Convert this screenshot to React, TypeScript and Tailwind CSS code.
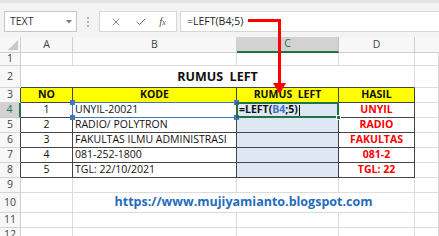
import { X, Check } from "lucide-react";

const rows = [
  { n: 4, no: "1", kode: "UNYIL-20021", hasil: "UNYIL" },
  { n: 5, no: "2", kode: "RADIO/ POLYTRON", hasil: "RADIO" },
  { n: 6, no: "3", kode: "FAKULTAS ILMU ADMINISTRASI", hasil: "FAKULTAS" },
  { n: 7, no: "4", kode: "081-252-1800", hasil: "081-2" },
  { n: 8, no: "5", kode: "TGL: 22/10/2021", hasil: "TGL: 22" },
];

const RowHead = ({ n, active = false, table = false }: { n: number; active?: boolean; table?: boolean }) => {
  if (active) {
    return (
      <div className="flex items-center justify-center bg-[#d2d2d2] text-[#217346] border-b border-b-[#c6c6c6] border-r-2 border-r-[#217346] text-[10.5px]">
        {n}
      </div>
    );
  }
  return (
    <div
      className={
        "flex items-center justify-center bg-[#f7f7f7] text-[#444] border-b border-b-[#d4d4d4] border-r text-[10.5px] " +
        (table ? "border-r-[#444]" : "border-r-[#cfcfcf]")
      }
    >
      {n}
    </div>
  );
};

const Blank = () => <div className="border-r border-b border-[#dcdcdc]" />;

export default function App() {
  return (
    <div className="relative w-[439px] h-[236px] overflow-hidden bg-white font-['Open_Sans',sans-serif]">
      {/* formula bar */}
      <div className="h-[37px] bg-[#f3f3f3] border-t-[3px] border-[#e2e2e2] flex items-start pt-[8px] pl-[4px]">
        <div className="w-[73px] h-[21px] bg-white border border-[#c6c6c6] flex items-center justify-between pl-[5px] pr-[4px] text-[10.5px] text-[#333]">
          <span>TEXT</span>
          <svg width="6" height="4" viewBox="0 0 6 4">
            <path d="M0 0 H6 L3 3.5 Z" fill="#777" />
          </svg>
        </div>
        <div className="w-[22px] h-[21px] flex flex-col items-center justify-center gap-[2px]">
          <span className="w-[2px] h-[2px] bg-[#b0b0b0]" />
          <span className="w-[2px] h-[2px] bg-[#b0b0b0]" />
          <span className="w-[2px] h-[2px] bg-[#b0b0b0]" />
        </div>
        <div className="w-[78px] h-[21px] bg-white border border-[#d6d6d6] flex items-center justify-around px-[4px] text-[#555]">
          <X size={12} strokeWidth={1.4} />
          <Check size={12} strokeWidth={1.8} />
          <span className="italic text-[11px] font-['Liberation_Serif',serif] leading-none">
            f<span className="text-[8px]">x</span>
          </span>
        </div>
        <div className="ml-[3px] flex-1 h-[21px] bg-white border border-r-0 border-[#d6d6d6] flex items-center pl-[6px] text-[10.5px] text-[#222]">
          =LEFT(B4;5)
        </div>
      </div>

      {/* sheet */}
      <div className="grid grid-cols-[21px_52px_164px_102px_76px_24px] grid-rows-[16px_13px_22px_15px_15px_15px_15px_15px_15px_15px_20px_15px_15px] text-[10.5px] text-[#111]">
        {/* column headers */}
        <div className="relative bg-[#f7f7f7] border-r border-b border-[#cfcfcf]">
          <svg className="absolute right-[2px] bottom-[2px]" width="10" height="10" viewBox="0 0 10 10">
            <path d="M10 0 V10 H0 Z" fill="#c8c8c8" />
          </svg>
        </div>
        <div className="flex items-center justify-center bg-[#f7f7f7] text-[#444] border-r border-b border-[#cfcfcf]">A</div>
        <div className="flex items-center justify-center bg-[#f7f7f7] text-[#444] border-r border-b border-[#cfcfcf]">B</div>
        <div className="flex items-center justify-center bg-[#d2d2d2] text-[#217346] border-r border-r-[#c0c0c0] border-b-2 border-b-[#217346]">C</div>
        <div className="flex items-center justify-center bg-[#f7f7f7] text-[#444] border-r border-b border-[#cfcfcf]">D</div>
        <div className="bg-[#f7f7f7] border-b border-[#cfcfcf]" />

        {/* row 1 */}
        <RowHead n={1} />
        <Blank />
        <Blank />
        <Blank />
        <Blank />
        <Blank />

        {/* row 2 */}
        <RowHead n={2} />
        <div className="col-span-4 flex items-center justify-center border-r border-r-[#dcdcdc] border-b border-b-[#444] font-bold text-[12.5px] pt-[2px]">
          RUMUS&nbsp;&nbsp;LEFT
        </div>
        <Blank />

        {/* row 3 */}
        <RowHead n={3} table />
        <div className="flex items-center justify-center bg-[#ffff00] border-r border-b border-[#444] font-bold">NO</div>
        <div className="flex items-center justify-center bg-[#ffff00] border-r border-b border-[#444] font-bold">KODE</div>
        <div className="flex items-center justify-center bg-[#ffff00] border-r border-b border-[#444] font-bold">RUMUS&nbsp;&nbsp;LEFT</div>
        <div className="flex items-center justify-center bg-[#ffff00] border-r border-b border-[#444] font-bold">HASIL</div>
        <Blank />

        {/* rows 4-8 */}
        {rows.map((r) => (
          <div key={r.n} className="contents">
            <RowHead n={r.n} active={r.n === 4} table />
            <div className="flex items-center justify-center border-r border-b border-[#444]">{r.no}</div>
            {r.n === 4 ? (
              <div className="relative flex items-center pl-[2px] border-r border-b border-[#444]">
                {r.kode}
                <div className="absolute z-10 -left-[1px] -top-[1px] -right-[1px] -bottom-[1px] border border-[#4472c4]" />
                <div className="absolute z-10 -left-[3px] -top-[3px] w-[5px] h-[5px] bg-[#4472c4]" />
                <div className="absolute z-10 -left-[3px] -bottom-[3px] w-[5px] h-[5px] bg-[#4472c4]" />
                <div className="absolute z-10 -right-[3px] -top-[3px] w-[5px] h-[5px] bg-[#4472c4]" />
                <div className="absolute z-10 -right-[3px] -bottom-[3px] w-[5px] h-[5px] bg-[#4472c4]" />
              </div>
            ) : (
              <div className="flex items-center pl-[2px] border-r border-b border-[#444]">{r.kode}</div>
            )}
            {r.n === 4 ? (
              <div className="relative flex items-center pl-[2px] bg-[#dde8f4] border-r border-b border-[#444] font-bold">
                =LEFT(<span className="text-[#4472c4]">B4</span>;5)
                <span className="ml-[1px] w-[1px] h-[11px] bg-black" />
                <div className="absolute z-20 -left-[1px] -top-[1px] -right-[1px] -bottom-[1px] border-2 border-[#217346]" />
                <div className="absolute z-20 -right-[3px] -bottom-[3px] w-[5px] h-[5px] bg-[#217346] border border-white" />
              </div>
            ) : (
              <div className="bg-[#dde8f4] border-r border-b border-[#444]" />
            )}
            <div className="flex items-center justify-center border-r border-b border-[#444] font-bold text-[#ff0000]">{r.hasil}</div>
            <Blank />
          </div>
        ))}

        {/* row 9 */}
        <RowHead n={9} />
        <Blank />
        <Blank />
        <Blank />
        <Blank />
        <Blank />

        {/* row 10 */}
        <RowHead n={10} />
        <Blank />
        <div className="col-span-3 flex items-center justify-center border-r border-b border-[#dcdcdc] font-bold text-[12.5px] text-[#1f6cc0]">
          https://www.mujiyamianto.blogspot.com
        </div>
        <Blank />

        {/* row 11 */}
        <RowHead n={11} />
        <Blank />
        <Blank />
        <Blank />
        <Blank />
        <Blank />

        {/* row 12 */}
        <RowHead n={12} />
        <Blank />
        <Blank />
        <Blank />
        <Blank />
        <Blank />
      </div>

      {/* red arrow */}
      <svg className="absolute left-0 top-0 z-30 pointer-events-none" width="439" height="236" viewBox="0 0 439 236">
        <path d="M248 20.5 H279.5 V86" fill="none" stroke="#ff0000" strokeWidth="3" />
        <path d="M273 83 H286 L279.5 94 Z" fill="#ff0000" />
      </svg>
    </div>
  );
}
